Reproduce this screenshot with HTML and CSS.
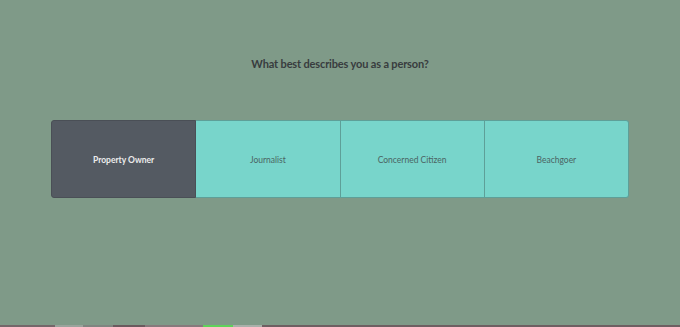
FILE: index.html
```html
<!DOCTYPE html>
<html>
<head>
<meta charset="utf-8">
<link rel="stylesheet" href="styles.css">
</head>
<body>
<div class="page">
  <h1 class="question">What best describes you as a person?</h1>
  <div class="options">
    <div class="option selected">Property Owner</div>
    <div class="option">Journalist</div>
    <div class="option">Concerned Citizen</div>
    <div class="option">Beachgoer</div>
  </div>
</div>
<div class="strip">
  <span class="seg s1"></span><span class="seg s2"></span><span class="seg s3"></span><span class="seg s4"></span><span class="seg s5"></span><span class="seg s6"></span><span class="seg s7"></span><span class="seg s8"></span>
</div>
</body>
</html>
```

FILE: styles.css
```css
html, body {
  margin: 0;
  padding: 0;
  height: 100%;
}
body {
  background: #7f9a88;
  font-family: Lato, "Open Sans", sans-serif;
  display: flex;
  flex-direction: column;
  overflow: hidden;
}
.page {
  flex: 1;
  display: flex;
  flex-direction: column;
  align-items: center;
}
.question {
  margin: 56px 0 0;
  font-size: 11px;
  font-weight: 700;
  letter-spacing: -0.15px;
  color: #383c3e;
  line-height: 15px;
}
.options {
  margin-top: 49px;
  display: flex;
  width: 578px;
  height: 78px;
}
.option {
  flex: 1;
  display: flex;
  align-items: center;
  justify-content: center;
  padding-top: 1px;
  background: #78d5cb;
  border: 1px solid #5e9f98;
  border-left: none;
  font-size: 8.5px;
  color: #4b6463;
  box-sizing: border-box;
}
.option:first-child {
  border-left: 1px solid #4a4f56;
  border-radius: 3px 0 0 3px;
}
.option:last-child {
  border-radius: 0 3px 3px 0;
}
.option.selected {
  background: #545a62;
  border-color: #4a4f56;
  color: #ececec;
  font-weight: 700;
}
.strip {
  height: 2px;
  display: flex;
  background: #6a5a5e;
}
.seg { display: block; height: 2px; }
.s1 { width: 55px; background: #74676a; }
.s2 { width: 28px; background: #9aa39c; }
.s3 { width: 30px; background: #7f8580; }
.s4 { width: 32px; background: #6a5a5e; }
.s5 { width: 58px; background: #867a7c; }
.s6 { width: 30px; background: #5ed25a; }
.s7 { width: 29px; background: #a9b0aa; }
.s8 { flex: 1; background: #6e5f62; }
```
